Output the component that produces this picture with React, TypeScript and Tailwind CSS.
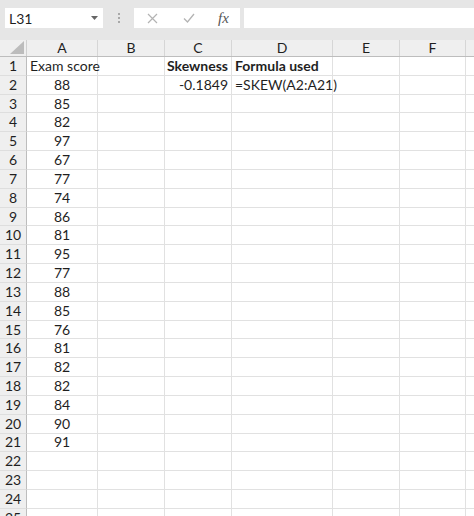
const cols = ["A", "B", "C", "D", "E", "F", ""];

const scores = [88, 85, 82, 97, 67, 77, 74, 86, 81, 95, 77, 88, 85, 76, 81, 82, 82, 84, 90, 91];

// same track sizes for the header and every row
const track = "grid grid-cols-[27px_71px_67px_67px_101px_67px_66px_20px]";

function cellContent(row: number, col: number) {
  if (row === 1) {
    if (col === 0) return <span className="pl-[3px]">Exam score</span>;
    if (col === 2) return <span className="font-bold pl-[2px]">Skewness</span>;
    if (col === 3) return <span className="font-bold pl-[3px]">Formula used</span>;
    return null;
  }
  if (row >= 2 && row <= 21 && col === 0) {
    return <span className="w-full text-center">{scores[row - 2]}</span>;
  }
  if (row === 2 && col === 2) return <span className="w-full text-right pr-[3px]">-0.1849</span>;
  if (row === 2 && col === 3) return <span className="pl-[3px]">=SKEW(A2:A21)</span>;
  return null;
}

export default function App() {
  const rows = Array.from({ length: 25 }, (_, i) => i + 1);
  return (
    <div className="w-[474px] h-[516px] overflow-hidden bg-white text-[#1f1f1f] font-['Lato','Liberation_Sans',sans-serif]">
      {/* Formula bar */}
      <div className="h-[40px] bg-[#e6e6e6] flex items-start pt-[8px] pl-[5px]">
        <div className="w-[98px] h-[20px] bg-white flex items-center justify-between pl-[4px] pr-[5px] text-[14px]">
          <span>L31</span>
          <svg width="7" height="4" viewBox="0 0 7 4">
            <path d="M0 0h7L3.5 4z" fill="#666" />
          </svg>
        </div>
        <div className="w-[31px] h-[20px] flex flex-col items-center justify-center gap-[2px]">
          <span className="w-[2px] h-[2px] bg-[#a8a8a8]" />
          <span className="w-[2px] h-[2px] bg-[#a8a8a8]" />
          <span className="w-[2px] h-[2px] bg-[#a8a8a8]" />
        </div>
        <div className="w-[106px] h-[20px] bg-white flex items-center">
          <svg className="ml-[13px]" width="11" height="11" viewBox="0 0 11 11">
            <path d="M1 1l9 9M10 1l-9 9" stroke="#b3b3b3" strokeWidth="1.2" />
          </svg>
          <svg className="ml-[25px]" width="12" height="10" viewBox="0 0 12 10">
            <path d="M1 5.5l3.5 3.5L11 1" stroke="#b3b3b3" strokeWidth="1.3" fill="none" />
          </svg>
          <span className="ml-[23px] italic text-[15px] text-[#555] font-['Liberation_Serif',serif]">
            fx
          </span>
        </div>
        <div className="ml-[4px] flex-1 h-[20px] bg-white" />
      </div>

      {/* Column headers */}
      <div className={`${track} h-[17px] bg-[#efefef] border-b border-[#bdbdbd] text-[14px]`}>
        <div className="h-full relative border-r border-[#d0d0d0]">
          <svg className="absolute right-[2px] bottom-[2px]" width="14" height="13" viewBox="0 0 14 13">
            <path d="M14 0V13H0z" fill="#bcbcbc" />
          </svg>
        </div>
        {cols.map((c, i) => (
          <div
            key={i}
            className="h-full flex items-center justify-center border-r border-[#d6d6d6] leading-none"
          >
            {c}
          </div>
        ))}
      </div>

      {/* Rows */}
      {rows.map((r) => (
        <div key={r} className={`${track} h-[18.83px] text-[14px]`}>
          <div className="h-full bg-[#efefef] border-r border-[#bdbdbd] border-b border-b-[#dedede] flex items-center justify-center leading-none">
            {r}
          </div>
          {cols.map((_, ci) => (
            <div
              key={ci}
              className="h-full flex items-center border-r border-b border-[#e1e1e1] leading-none whitespace-nowrap"
            >
              {cellContent(r, ci)}
            </div>
          ))}
        </div>
      ))}
    </div>
  );
}
